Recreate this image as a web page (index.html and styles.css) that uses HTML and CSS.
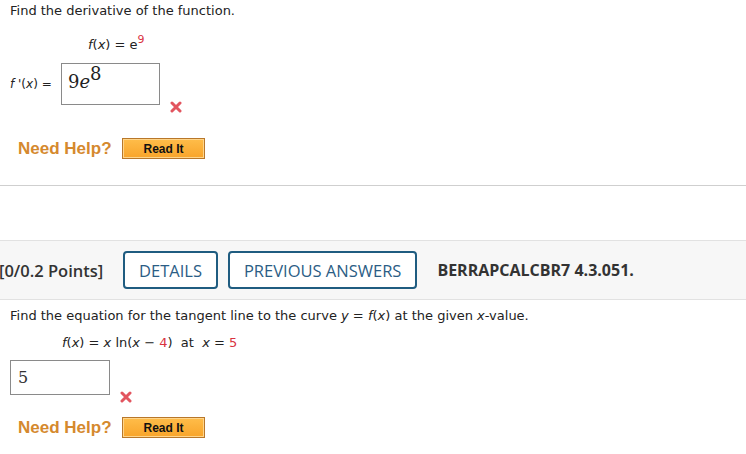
FILE: index.html
```html
<!DOCTYPE html>
<html>
<head>
    <title>Derivative</title>
    <link rel="stylesheet" href="styles.css">
</head>
<body>
    <div class="question first">
        <p class="prompt">Find the derivative of the function.</p>
        <p class="given"><i>f</i>(<i>x</i>) = e<sup class="red">9</sup></p>
        <div class="answer-row">
            <span class="lhs"><i>f</i> '(<i>x</i>) =</span>
            <div class="answer big">9<i>e</i><sup>8</sup></div>
            <svg class="wrong" width="12" height="12" viewBox="0 0 12 12"><path d="M2 2 L10 10 M10 2 L2 10" stroke="#e2555f" stroke-width="3" stroke-linecap="round"/></svg>
        </div>
        <div class="help">
            <span class="need">Need Help?</span>
            <button class="read">Read It</button>
        </div>
    </div>

    <div class="spacer"></div>

    <div class="header">
        <span class="points">[0/0.2 Points]</span>
        <button class="tab">DETAILS</button>
        <button class="tab">PREVIOUS ANSWERS</button>
        <span class="code">BERRAPCALCBR7 4.3.051.</span>
    </div>

    <div class="question second">
        <p class="prompt">Find the equation for the tangent line to the curve <i>y</i> = <i>f</i>(<i>x</i>) at the given <i>x</i>-value.</p>
        <p class="given2"><i>f</i>(<i>x</i>) = <i>x</i> ln(<i>x</i> &minus; <span class="red">4</span>)&nbsp; at&nbsp; <i>x</i> = <span class="red">5</span></p>
        <div class="answer-row">
            <div class="answer small">5</div>
            <svg class="wrong" width="12" height="12" viewBox="0 0 12 12"><path d="M2 2 L10 10 M10 2 L2 10" stroke="#e2555f" stroke-width="3" stroke-linecap="round"/></svg>
        </div>
        <div class="help">
            <span class="need">Need Help?</span>
            <button class="read">Read It</button>
        </div>
    </div>
</body>
</html>
```
FILE: styles.css
```css
body {
    margin: 0;
    font-family: 'DejaVu Sans', Verdana, sans-serif;
    font-size: 13px;
    color: #222;
    background: white;
}

p {
    margin: 0;
}

i {
    font-style: oblique;
}

.red {
    color: #d9323f;
}

.question {
    padding-left: 10px;
}

.first {
    padding-top: 3px;
    padding-bottom: 26px;
    border-bottom: 1px solid #cfcfcf;
}

.prompt {
    line-height: 16px;
}

.given {
    margin-top: 18px;
    padding-left: 78px;
    line-height: 16px;
}

sup {
    font-size: 11px;
    vertical-align: 6px;
    line-height: 0;
}

.answer-row {
    display: flex;
    align-items: flex-end;
}

.first .answer-row {
    margin-top: 10px;
}

.lhs {
    font-size: 12px;
    align-self: center;
    width: 51px;
}

.answer {
    border: 1px solid #8a8a8a;
    font-family: 'DejaVu Serif', 'Liberation Serif', serif;
    box-sizing: border-box;
}

.big {
    width: 99px;
    height: 42px;
    padding: 6px 0 0 6px;
    font-size: 18px;
    line-height: 24px;
}

.big sup {
    font-size: 18px;
    vertical-align: 8px;
}

.small {
    width: 100px;
    height: 35px;
    padding: 6px 0 0 7px;
    font-size: 16px;
    line-height: 22px;
    color: #333;
}

.wrong {
    margin-left: 10px;
    margin-bottom: -8px;
}

.help {
    display: flex;
    align-items: center;
    margin-top: 33px;
    padding-left: 8px;
}

.need {
    font-family: 'Liberation Sans', Arial, sans-serif;
    font-weight: bold;
    font-size: 17px;
    color: #d5892e;
    width: 104px;
}

.read {
    width: 83px;
    height: 21px;
    padding: 0;
    border: 1px solid #b8772a;
    box-shadow: inset 0 0 0 1px #ffd58a;
    background: linear-gradient(#ffbd4a, #f8a42a);
    font-family: 'Liberation Sans', Arial, sans-serif;
    font-weight: bold;
    font-size: 12px;
    color: #111;
}

.spacer {
    height: 54px;
}

.header {
    display: flex;
    align-items: center;
    gap: 10px;
    height: 58px;
    background: #f7f7f7;
    border-top: 1px solid #e2e2e2;
    border-bottom: 1px solid #e2e2e2;
    font-family: 'Open Sans', sans-serif;
    font-size: 16.5px;
    color: #333;
}

.points {
    font-weight: 600;
    margin-left: -1px;
    width: 114px;
}

.tab {
    height: 38px;
    padding: 0 14px;
    border: 2px solid #1f5c80;
    border-radius: 4px;
    background: white;
    font-family: 'Open Sans', sans-serif;
    font-size: 16.5px;
    color: #2b5d85;
}

.code {
    font-weight: bold;
    font-size: 16px;
    margin-left: 10px;
}

.second {
    padding-top: 8px;
}

.given2 {
    margin-top: 11px;
    padding-left: 52px;
}

.second .answer-row {
    margin-top: 10px;
}

.second .help {
    margin-top: 22px;
}
```
